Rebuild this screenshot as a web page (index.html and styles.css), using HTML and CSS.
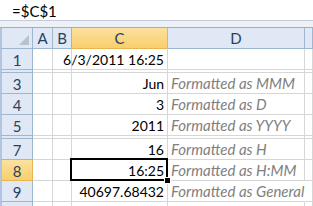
FILE: index.html
```html
<!doctype html>
<html lang="en">
    <head>
        <meta charset="UTF-8" />
        <meta name="viewport" content="width=device-width, initial-scale=1.0" />
        <title>Date formats</title>
        <link rel="stylesheet" href="styles.css">
    </head>
    <body>
        <div class="formula-bar">
            <span class="formula">=$C$1</span>
        </div>
        <div class="band"></div>

        <div class="sheet">
            <!-- column headers -->
            <div class="head corner">
                <svg width="10" height="10" viewBox="0 0 10 10"><polygon points="10,0 10,10 0,10" fill="#b6c2d0" /></svg>
            </div>
            <div class="head">A</div>
            <div class="head">B</div>
            <div class="head selected">C</div>
            <div class="head">D</div>
            <div class="head"></div>

            <!-- row 1 -->
            <div class="head row-head">1</div>
            <div class="cell"></div>
            <div class="cell"></div>
            <div class="cell num">6/3/2011 16:25</div>
            <div class="cell"></div>
            <div class="cell"></div>

            <!-- row 2 (hidden) -->
            <div class="head row-head"></div>
            <div class="cell"></div>
            <div class="cell"></div>
            <div class="cell"></div>
            <div class="cell"></div>
            <div class="cell"></div>

            <!-- row 3 -->
            <div class="head row-head">3</div>
            <div class="cell"></div>
            <div class="cell"></div>
            <div class="cell num">Jun</div>
            <div class="cell note">Formatted as MMM</div>
            <div class="cell"></div>

            <!-- row 4 -->
            <div class="head row-head">4</div>
            <div class="cell"></div>
            <div class="cell"></div>
            <div class="cell num">3</div>
            <div class="cell note">Formatted as D</div>
            <div class="cell"></div>

            <!-- row 5 -->
            <div class="head row-head">5</div>
            <div class="cell"></div>
            <div class="cell"></div>
            <div class="cell num">2011</div>
            <div class="cell note">Formatted as YYYY</div>
            <div class="cell"></div>

            <!-- row 6 (hidden) -->
            <div class="head row-head"></div>
            <div class="cell"></div>
            <div class="cell"></div>
            <div class="cell"></div>
            <div class="cell"></div>
            <div class="cell"></div>

            <!-- row 7 -->
            <div class="head row-head">7</div>
            <div class="cell"></div>
            <div class="cell"></div>
            <div class="cell num">16</div>
            <div class="cell note">Formatted as H</div>
            <div class="cell"></div>

            <!-- row 8 -->
            <div class="head row-head selected">8</div>
            <div class="cell"></div>
            <div class="cell"></div>
            <div class="cell num active">16:25<span class="fill-handle"></span></div>
            <div class="cell note">Formatted as H:MM</div>
            <div class="cell"></div>

            <!-- row 9 -->
            <div class="head row-head">9</div>
            <div class="cell"></div>
            <div class="cell"></div>
            <div class="cell num">40697.68432</div>
            <div class="cell note spill">Formatted as General</div>
            <div class="cell"></div>

            <!-- row 10, only its top edge shows -->
            <div class="head row-head"></div>
            <div class="cell"></div>
            <div class="cell"></div>
            <div class="cell"></div>
            <div class="cell"></div>
            <div class="cell"></div>
        </div>
    </body>
</html>
```

FILE: styles.css
```css
/* General Styles */
body {
    font-family: Lato, "Liberation Sans", sans-serif;
    margin: 0;
    padding: 0;
    background-color: #fff;
    overflow: hidden;
}

/* Formula bar */
.formula-bar {
    height: 21px;
    box-sizing: border-box;
    border-bottom: 1px solid #c4ccd7;
    padding-left: 12px;
    display: flex;
    align-items: flex-end;
    font-size: 15px;
    line-height: 17px;
    color: #000;
}

.band {
    height: 7px;
    box-sizing: border-box;
    background-color: #edf1f7;
    border-bottom: 1px solid #9aafca;
}

/* Grid */
.sheet {
    display: grid;
    grid-template-columns: 33px 20px 19px 96px 137px 1fr;
    grid-template-rows: 21px 21px 3px 21px 21px 21px 3px 21px 21px 21px 21px;
}

.cell {
    box-sizing: border-box;
    border-right: 1px solid #d6d6d6;
    border-bottom: 1px solid #d6d6d6;
    padding: 0 3px 1px;
    display: flex;
    align-items: flex-end;
    white-space: nowrap;
    font-size: 14px;
    line-height: 17px;
    color: #000;
}

.num {
    justify-content: flex-end;
}

.note {
    color: #808080;
    font-style: italic;
    font-size: 15px;
    overflow: visible;
}

.spill {
    border-right-color: transparent;
}

/* Headers */
.head {
    box-sizing: border-box;
    background-color: #dfe8f4;
    border-right: 1px solid #9eb6ce;
    border-bottom: 1px solid #9eb6ce;
    display: flex;
    justify-content: center;
    align-items: center;
    font-size: 15px;
    color: #27415f;
    overflow: hidden;
}

.row-head {
    border-left: 2px solid #b3c5de;
    align-items: flex-end;
    line-height: 18px;
}

.corner {
    border-left: 2px solid #b3c5de;
    justify-content: flex-end;
    align-items: flex-end;
    padding: 0 3px 3px 0;
}

.corner svg {
    display: block;
}

.head.selected {
    background: linear-gradient(#fbe1a0, #f8cf6b);
    border-bottom-color: #e9b552;
    border-right-color: #e9b552;
}

/* Active cell */
.active {
    position: relative;
}

.active::after {
    content: "";
    position: absolute;
    left: -2px;
    top: -2px;
    right: -1px;
    bottom: -1px;
    border: 2px solid #000;
}

.fill-handle {
    position: absolute;
    right: -4px;
    bottom: -4px;
    width: 5px;
    height: 5px;
    background-color: #000;
    border: 1px solid #fff;
    z-index: 1;
}
```
